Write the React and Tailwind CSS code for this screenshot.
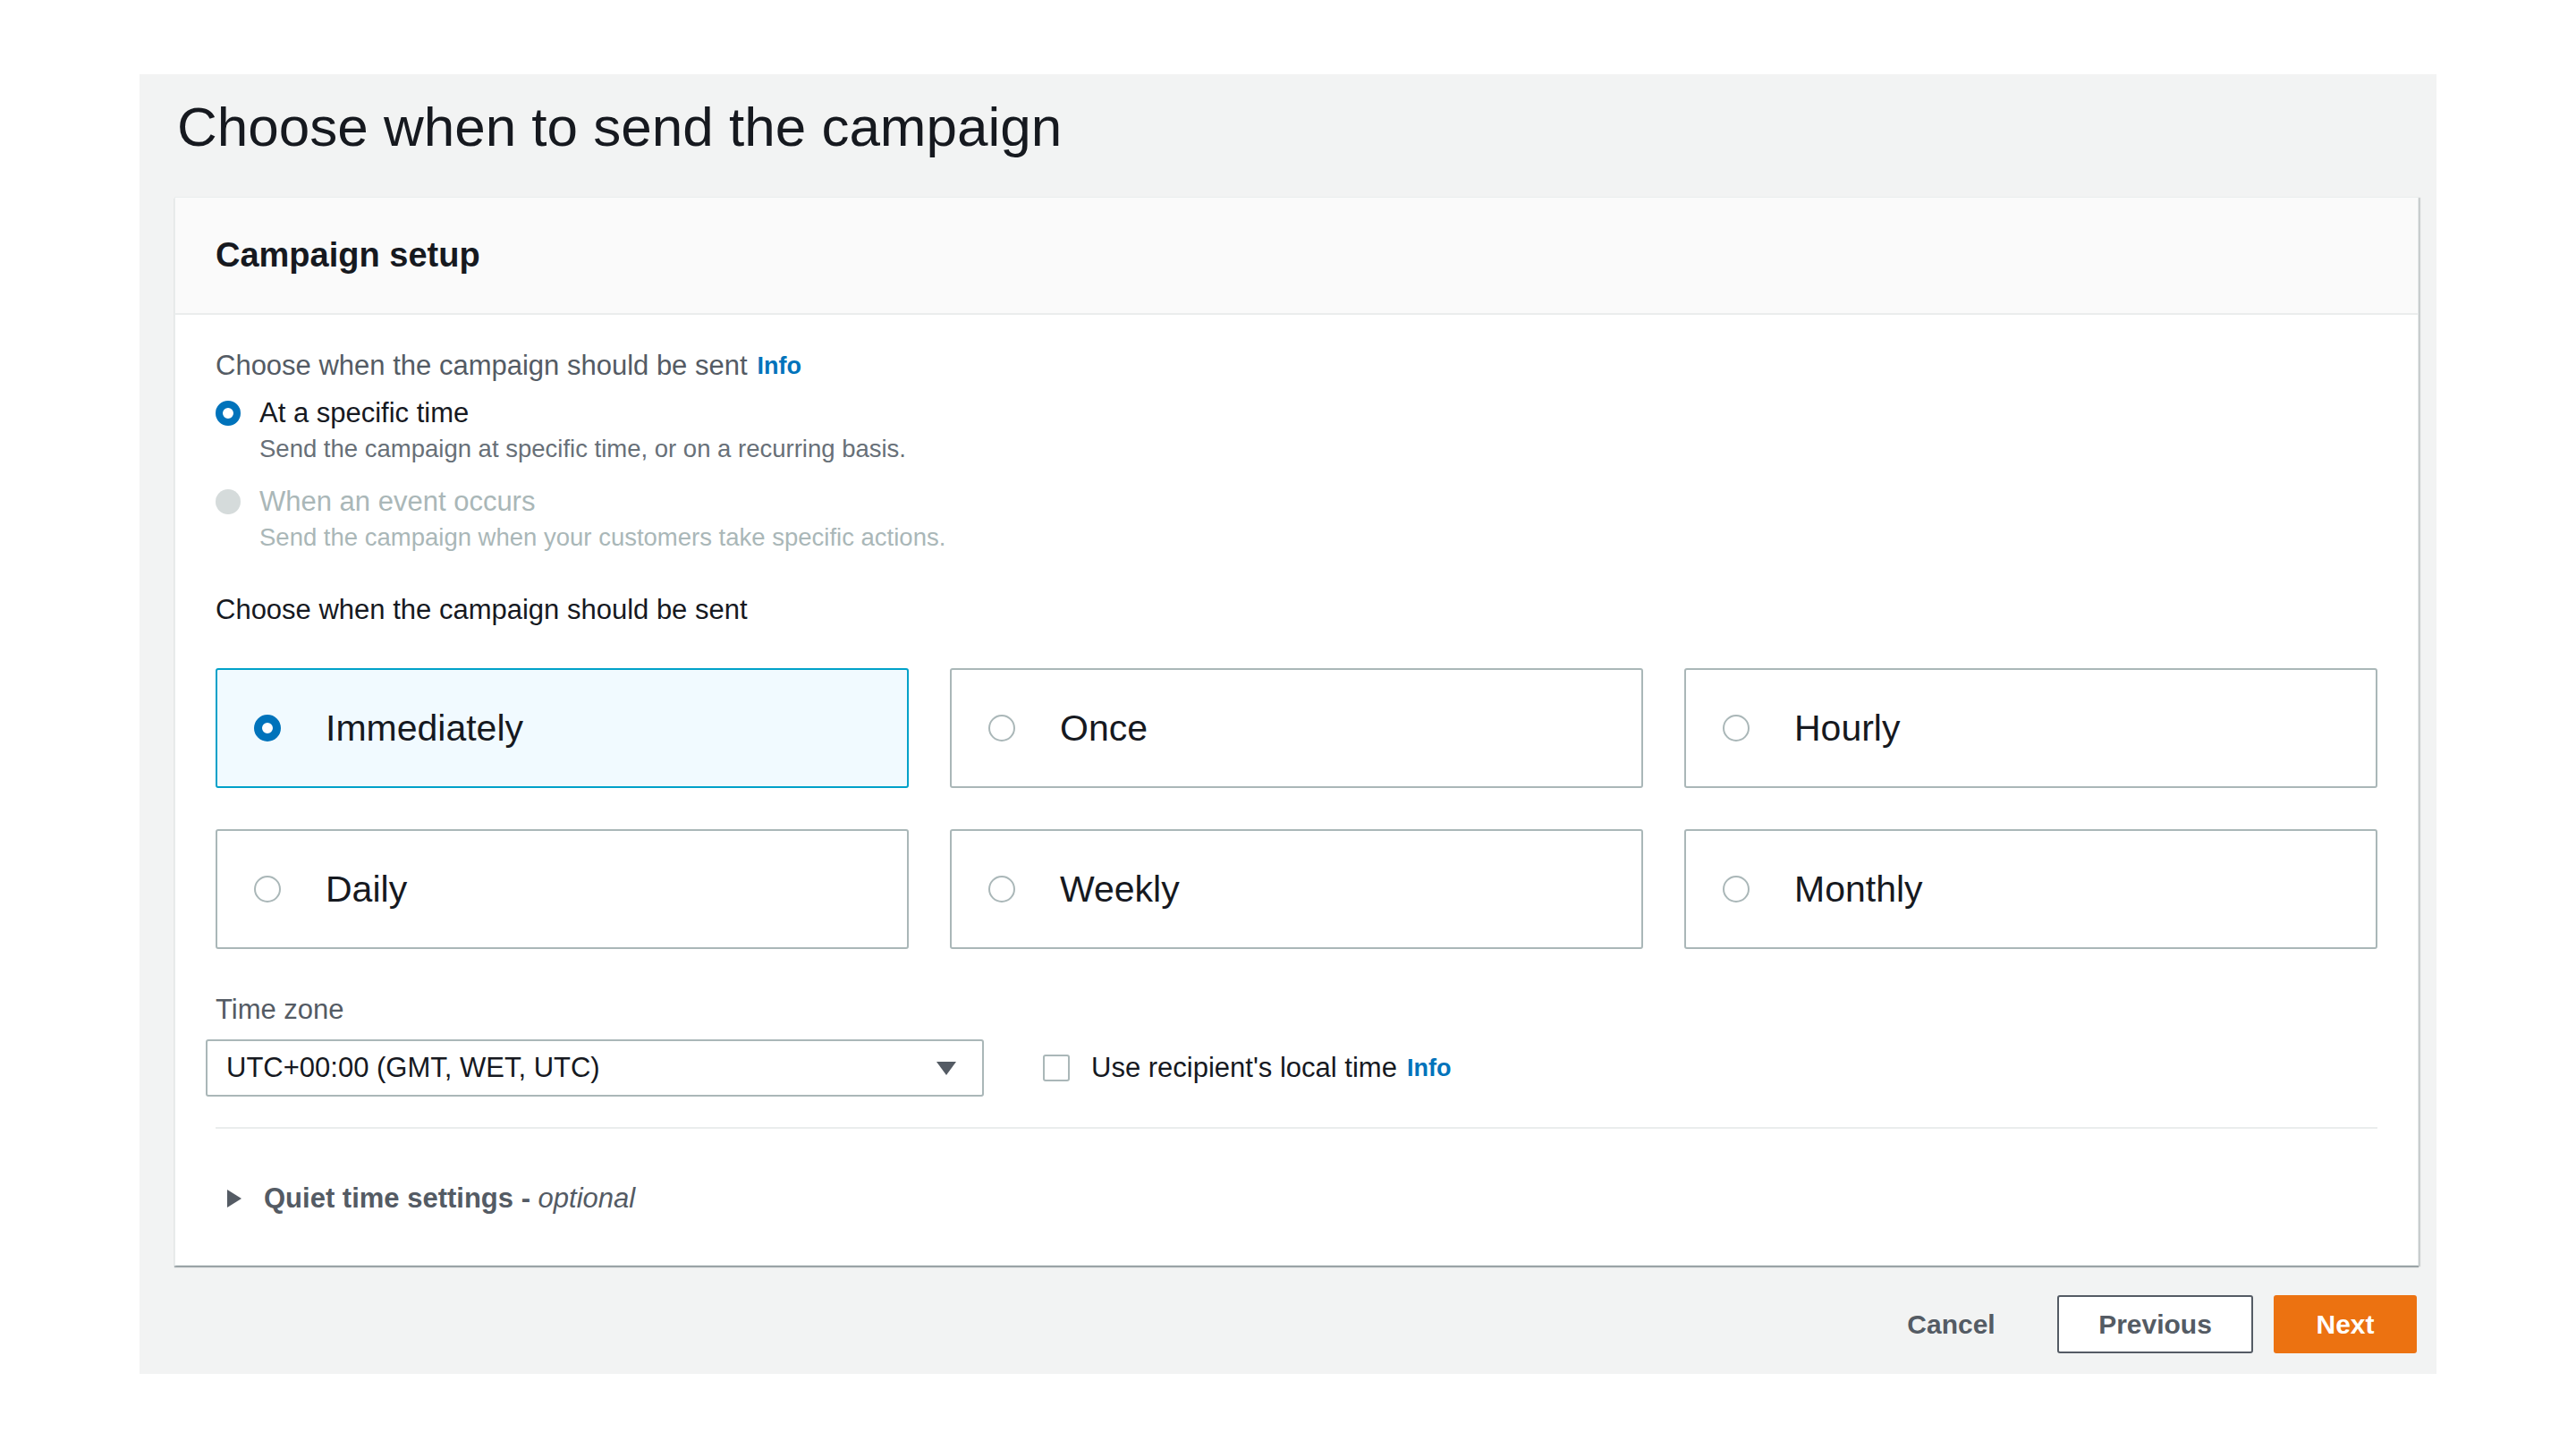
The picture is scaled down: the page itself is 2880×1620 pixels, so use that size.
import React, { useState } from 'react';

const options = ['Immediately', 'Once', 'Hourly', 'Daily', 'Weekly', 'Monthly'];

const InfoLink = () => (
  <a className="ml-[11px] text-[27px] font-bold text-[#0073bb] leading-[36px] cursor-pointer">Info</a>
);

const App = () => {
  const [frequency, setFrequency] = useState('Immediately');
  const [localTime, setLocalTime] = useState(false);

  return (
    <div className="w-[2880px] h-[1620px] bg-white pt-[83px] pl-[156px] font-['Liberation_Sans',Arial,sans-serif] text-[#16191f]">
      <div className="w-[2568px] h-[1453px] bg-[#f2f3f3] pt-[22px] flex flex-col">
        <h1 className="ml-[42px] text-[62px] leading-[74px] text-[#16191f]">
          Choose when to send the campaign
        </h1>

        {/* Card */}
        <div className="ml-[39px] mt-[41px] w-[2509px] bg-white border border-[#eaeded] shadow-[0_2px_1px_0_rgba(0,28,36,0.3),2px_1px_1px_0_rgba(0,28,36,0.15)]">
          <div className="h-[131px] px-[45px] flex items-center bg-[#fafafa] border-b-2 border-[#eaeded]">
            <h2 className="text-[38px] font-bold text-[#16191f]">Campaign setup</h2>
          </div>

          <div className="px-[45px] pt-[39px] pb-[56px] flex flex-col">
            <div className="flex items-center text-[31px] leading-[36px] text-[#545b64]">
              <span>Choose when the campaign should be sent</span>
              <InfoLink />
            </div>

            {/* Trigger type */}
            <div className="mt-[17px] flex gap-[21px]">
              <div className="mt-[4px] w-[28px] h-[28px] rounded-full border-[8px] border-[#0073bb] bg-white shrink-0" />
              <div className="flex flex-col">
                <span className="text-[31px] leading-[36px] text-[#16191f]">At a specific time</span>
                <span className="mt-[6px] text-[27.5px] leading-[32px] text-[#687078]">
                  Send the campaign at specific time, or on a recurring basis.
                </span>
              </div>
            </div>
            <div className="mt-[25px] flex gap-[21px]">
              <div className="mt-[4px] w-[28px] h-[28px] rounded-full bg-[#d5dbdb] shrink-0" />
              <div className="flex flex-col">
                <span className="text-[31px] leading-[36px] text-[#aab7b8]">When an event occurs</span>
                <span className="mt-[6px] text-[27.5px] leading-[32px] text-[#aab7b8]">
                  Send the campaign when your customers take specific actions.
                </span>
              </div>
            </div>

            <div className="mt-[47px] text-[31px] leading-[36px] text-[#16191f]">
              Choose when the campaign should be sent
            </div>

            {/* Frequency tiles */}
            <div className="mt-[47px] grid grid-cols-3 gap-x-[46px] gap-y-[46px]">
              {options.map((opt) => {
                const selected = frequency === opt;
                return (
                  <button
                    key={opt}
                    onClick={() => setFrequency(opt)}
                    className={`h-[134px] flex items-center pl-[41px] rounded-[3px] border-2 text-left ${
                      selected ? 'border-[#00a1c9] bg-[#f1faff]' : 'border-[#aab7b8] bg-white'
                    }`}
                  >
                    {selected ? (
                      <span className="w-[30px] h-[30px] rounded-full border-[9px] border-[#0073bb] bg-white shrink-0" />
                    ) : (
                      <span className="w-[30px] h-[30px] rounded-full border-2 border-[#aab7b8] bg-white shrink-0" />
                    )}
                    <span className="ml-[50px] text-[41px] leading-[48px] text-[#16191f]">{opt}</span>
                  </button>
                );
              })}
            </div>

            {/* Time zone */}
            <div className="mt-[50px] text-[31px] leading-[36px] text-[#545b64]">Time zone</div>
            <div className="mt-[15px] flex items-center">
              <div className="-ml-[11px] w-[870px] h-[64px] border-2 border-[#aab7b8] rounded-[3px] pl-[21px] pr-[28px] flex items-center justify-between bg-white">
                <span className="text-[31px] text-[#16191f]">UTC+00:00 (GMT, WET, UTC)</span>
                <svg width="24" height="17" viewBox="0 0 24 17">
                  <path d="M1 1 L23 1 L12 16 Z" fill="#545b64" />
                </svg>
              </div>
              <button
                onClick={() => setLocalTime(!localTime)}
                className={`ml-[66px] w-[30px] h-[30px] border-2 rounded-[3px] shrink-0 ${
                  localTime ? 'bg-[#0073bb] border-[#0073bb]' : 'bg-white border-[#aab7b8]'
                }`}
              />
              <span className="ml-[24px] text-[31px] leading-[36px] text-[#16191f]">Use recipient's local time</span>
              <InfoLink />
            </div>

            <div className="mt-[34px] h-[2px] bg-[#eaeded]" />

            {/* Quiet time */}
            <div className="mt-[60px] flex items-center h-[36px]">
              <svg className="ml-[12px]" width="18" height="22" viewBox="0 0 18 22">
                <path d="M1 1 L17 11 L1 21 Z" fill="#545b64" />
              </svg>
              <span className="ml-[24px] text-[31px] leading-[36px] text-[#545b64]">
                <span className="font-bold">Quiet time settings</span>
                <span className="font-bold"> - </span>
                <span className="italic">optional</span>
              </span>
            </div>
          </div>
        </div>

        {/* Footer actions */}
        <div className="mt-[33px] mr-[22px] flex justify-end gap-[23px]">
          <button className="w-[191px] h-[65px] text-[30px] font-bold text-[#545b64]">Cancel</button>
          <button className="w-[219px] h-[65px] text-[30px] font-bold text-[#545b64] bg-white border-2 border-[#545b64] rounded-[3px]">
            Previous
          </button>
          <button className="w-[160px] h-[65px] text-[30px] font-bold text-white bg-[#ec7211] rounded-[3px]">
            Next
          </button>
        </div>
      </div>
    </div>
  );
};

export default App;
